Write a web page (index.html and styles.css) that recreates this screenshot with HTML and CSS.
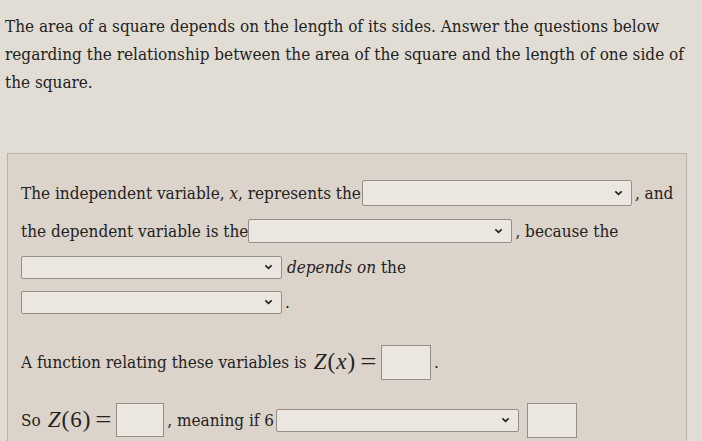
FILE: index.html
```html
<!DOCTYPE html>
<html lang="en">

<head>
    <meta charset="UTF-8">
    <title>Area of a Square</title>
    <link rel="stylesheet" href="styles.css">
</head>

<body>
    <p class="intro">The area of a square depends on the length of its sides. Answer the questions below regarding the relationship between the area of the square and the length of one side of the square.</p>

    <div class="panel">
        <div class="row">
            <span>The independent variable, <i>x</i>, represents the</span>
            <span class="select s1"><svg viewBox="0 0 10 6"><path d="M1.5 1.2 L5 4.6 L8.5 1.2"/></svg></span>
            <span>, and</span>
        </div>
        <div class="row r2">
            <span>the dependent variable is the</span>
            <span class="select s2"><svg viewBox="0 0 10 6"><path d="M1.5 1.2 L5 4.6 L8.5 1.2"/></svg></span>
            <span>, because the</span>
        </div>
        <div class="row">
            <span class="select s3"><svg viewBox="0 0 10 6"><path d="M1.5 1.2 L5 4.6 L8.5 1.2"/></svg></span>
            <span class="after"><i>depends on</i> the</span>
        </div>
        <div class="row r4">
            <span class="select s3"><svg viewBox="0 0 10 6"><path d="M1.5 1.2 L5 4.6 L8.5 1.2"/></svg></span>
            <span>.</span>
        </div>
        <div class="row r5">
            <span>A function relating these variables is</span>
            <span class="math"><i>Z</i>(<i>x</i>)<span class="eq">=</span></span>
            <span class="box b1"></span>
            <span>.</span>
        </div>
        <div class="row r6">
            <span>So</span>
            <span class="math"><i>Z</i>(6)<span class="eq">=</span></span>
            <span class="box b2"></span>
            <span>, meaning if 6</span>
            <span class="select s6"><svg viewBox="0 0 10 6"><path d="M1.5 1.2 L5 4.6 L8.5 1.2"/></svg></span>
            <span class="box b3"></span>
        </div>
    </div>
</body>

</html>
```

FILE: styles.css
```css
body {
    font-family: 'DejaVu Serif', 'Liberation Serif', serif;
    font-stretch: condensed;
    background-color: #e2ddd4;
    color: #222;
    margin: 0;
    height: 441px;
    overflow: hidden;
}

.intro {
    font-size: 17px;
    line-height: 28px;
    margin: 0;
    padding: 12px 10px 0 5px;
}

.panel {
    margin: 57px 15px 0 7px;
    background-color: #dcd3ca;
    border: 1px solid #b9b2a9;
    border-bottom: none;
    padding: 21px 12px 40px 13px;
    font-size: 17px;
}

.row {
    display: flex;
    align-items: center;
    height: 36px;
    white-space: nowrap;
}

.r2 {
    margin-top: 2px;
}

.r4 {
    margin-top: -1px;
}

.r5 {
    margin-top: 22px;
    height: 40px;
}

.r6 {
    margin-top: 19px;
    height: 38px;
}

/* math looks like the KaTeX serif */
.math {
    font-family: 'Liberation Serif', serif;
    font-size: 23px;
    letter-spacing: 1px;
    margin-left: 7px;
}

.eq {
    display: inline-block;
    transform: scaleX(1.25);
    margin: 0 2px 0 6px;
}

.select {
    display: flex;
    align-items: center;
    justify-content: flex-end;
    box-sizing: border-box;
    background-color: #ebe6df;
    border: 1px solid #958f87;
    border-radius: 2px;
    padding-right: 8px;
    margin: 0 3px 0 3px;
}

.select svg {
    width: 9px;
    height: 6px;
    fill: none;
    stroke: #222;
    stroke-width: 1.8;
}

.s1 {
    width: 270px;
    height: 26px;
    margin-left: 1px;
}

.s2 {
    width: 264px;
    height: 24px;
    margin-left: 0;
}

.s3 {
    width: 261px;
    height: 23px;
    margin-left: 0;
}

.s6 {
    width: 243px;
    height: 23px;
    margin-left: 2px;
    margin-right: 5px;
}

.after {
    margin-left: 2px;
}

.box {
    display: inline-block;
    box-sizing: border-box;
    background-color: #ebe6df;
    border: 1px solid #958f87;
    margin: 0 3px 0 3px;
}

.b1 {
    width: 50px;
    height: 35px;
}

.b2 {
    width: 48px;
    height: 34px;
}

.b3 {
    width: 50px;
    height: 35px;
}
```
